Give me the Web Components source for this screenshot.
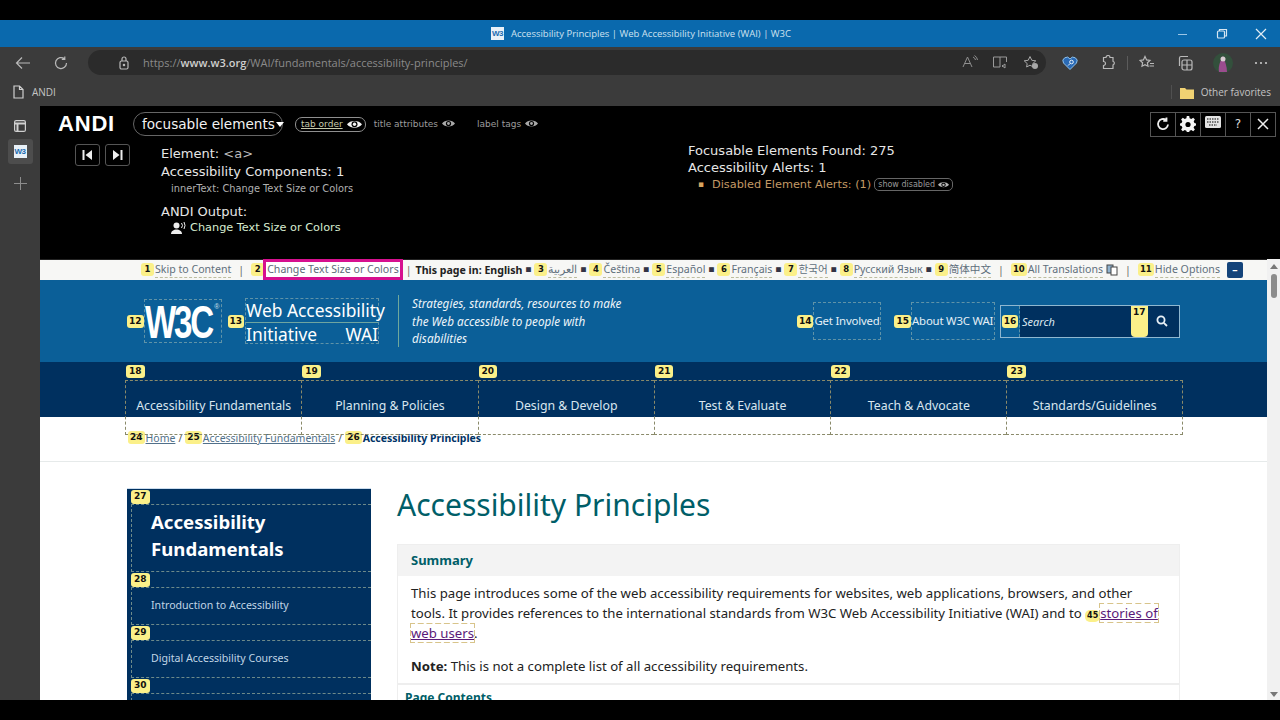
<!DOCTYPE html>
<html lang="en">
<head>
<meta charset="utf-8">
<title>Accessibility Principles</title>
<style>
    html, body { margin: 0; height: 720px; background: #000; overflow: hidden; }
    body { font-family: "Noto Sans", sans-serif; }
</style>
</head>
<body>
<app-shell></app-shell>
<script>
const eye = (c, s = 13) => `<svg width="${s}" height="${s * .7}" viewBox="0 0 20 14"><path d="M0 7C4 1 16 1 20 7C16 13 4 13 0 7Z" fill="${c}"/><circle cx="10" cy="7" r="4" fill="#000"/><circle cx="10" cy="7" r="2.2" fill="${c}"/></svg>`;
const w3Icon = `<span style="display:inline-flex;width:13px;height:13px;background:#e8f1f8;color:#1b6cb0;font:bold 8px 'Liberation Sans',sans-serif;align-items:center;justify-content:center;letter-spacing:-.5px">W3</span>`;

class NumBadge extends HTMLElement {
    constructor() {
        super();
        this.attachShadow({ mode: 'open' });
        this.shadowRoot.innerHTML = `
            <style>
                :host {
                    display: inline-block;
                    background: #fbf089;
                    color: #111;
                    font: bold 9px/13px "DejaVu Sans", sans-serif;
                    min-width: 9px;
                    padding: 0 2px;
                    border-radius: 3px;
                    text-align: center;
                    flex: none;
                    box-sizing: content-box;
                }
            </style>
            <slot></slot>
        `;
    }
}
customElements.define('num-badge', NumBadge);

class BrowserChrome extends HTMLElement {
    constructor() {
        super();
        this.attachShadow({ mode: 'open' });
        const st = 'fill="none" stroke="#b9b9b9" stroke-width="1.2"';
        this.shadowRoot.innerHTML = `
            <style>
                :host { display: block; font-family: "Open Sans", sans-serif; }
                #title {
                    height: 27px; background: #0a69ad; color: #cfe2f0; font-size: 9.5px;
                    display: grid; grid-template-columns: 1fr auto 1fr; align-items: center;
                }
                #tt { display: flex; align-items: center; gap: 7px; padding-left: 2px; }
                #win { display: flex; justify-content: flex-end; gap: 27px; padding-right: 13px; align-items: center; }
                #tools { height: 31px; background: #3b3b3b; display: flex; align-items: center; }
                .ic { display: flex; width: 38px; justify-content: center; flex: none; }
                #pill {
                    height: 25px; width: 974px; margin-left: 8px; background: #2b2b2b; border-radius: 13px;
                    display: flex; align-items: center; padding-left: 30px; box-sizing: border-box;
                    font-size: 11px; color: #8a8a8a; position: relative;
                }
                #pill b { font-weight: 600; color: #d0d0d0; }
                #lock { margin-right: 13px; display: flex; }
                #pr { margin-left: auto; display: flex; padding-right: 0; }
                #pr .ic { width: 30.5px; }
                #favs {
                    height: 28px; background: #3b3b3b; color: #c4c4c4; font-size: 10px;
                    display: flex; align-items: center; padding: 0 9px 0 13px; gap: 8px;
                }
                #oth { margin-left: auto; display: flex; align-items: center; gap: 7px; }
            </style>
            <div id="title">
                <span></span>
                <div id="tt">${w3Icon}<span>Accessibility Principles | Web Accessibility Initiative (WAI) | W3C</span></div>
                <div id="win">
                    <svg width="12" height="12"><path d="M1 6.5H10" stroke="#9cc6e6"/></svg>
                    <svg width="12" height="12" ${st.replace('#b9b9b9','#d6e6f2')}><rect x="1.5" y="3" width="7" height="7" rx="1"/><path d="M3.5 3V1.5H10.5V8H8.5"/></svg>
                    <svg width="12" height="12"><path d="M1 1L11 11M11 1L1 11" stroke="#e2edf5" stroke-width="1.2"/></svg>
                </div>
            </div>
            <div id="tools">
                <div class="ic" style="margin-left:4px"><svg width="16" height="14" ${st}><path d="M15 7H2M7 1.5L1.5 7L7 12.5"/></svg></div>
                <div class="ic"><svg width="14" height="14" ${st}><path d="M12.5 7A5.5 5.5 0 1 1 10.5 2.8M10.8 .5V3.4H7.8"/></svg></div>
                <div id="pill">
                    <span id="lock"><svg width="12" height="14" ${st}><rect x="2" y="5" width="8" height="8" rx="1.5"/><path d="M4 5V3A2 2 0 0 1 8 3V5"/><circle cx="6" cy="9" r=".7" fill="#b9b9b9"/></svg></span>
                    <span>https://<b>www.w3.org</b>/WAI/fundamentals/accessibility-principles/</span>
                    <div id="pr">
                        <div class="ic"><svg width="16" height="13" fill="none" stroke="#8f8f8f"><path d="M1 12L5.5 2L10 12M3 8.5H8M11 2A4 4 0 0 1 13.5 5M12.5 .5A6 6 0 0 1 15.5 5"/></svg></div>
                        <div class="ic"><svg width="16" height="14" fill="none" stroke="#9a9a9a"><path d="M8 2H1.5V12H8ZM8 2H14.5V7M10 10.5H11L13 9V13L11 11.5H10"/></svg></div>
                        <div class="ic"><svg width="16" height="15" fill="none" stroke="#a8a8a8"><path d="M7 1.5L8.8 5.3L12.8 5.8L9.8 8.6L10.4 12L7 10.2L3.6 12L4.2 8.6L1.2 5.8L5.2 5.3Z"/><circle cx="12" cy="11" r="3" fill="#a8a8a8" stroke="none"/></svg></div>
                    </div>
                </div>
                <div class="ic" style="margin-left:5px"><svg width="16" height="14"><path d="M8 13.5L1.5 7A3.8 3.8 0 0 1 8 3A3.8 3.8 0 0 1 14.5 7Z" fill="#2a6ab5" stroke="#8fc0ea"/><circle cx="9.5" cy="6" r="1.8" fill="none" stroke="#e6f0fa"/><path d="M8.2 7.4L6 9.6" stroke="#e6f0fa"/></svg></div>
                <div class="ic"><svg width="16" height="16" ${st}><path d="M6 2.5A2 2 0 0 1 10 2.5H13V6.2A2 2 0 0 1 13 10V13.5H3.5V10.5A2 2 0 0 0 3.5 6.5V2.5Z"/></svg></div>
                <svg width="1" height="14" style="flex:none"><path d="M.5 0V14" stroke="#5c5c5c"/></svg>
                <div class="ic" style="width:38px"><svg width="16" height="15" ${st}><path d="M6 1.5L7.6 4.9L11 5.4L8.4 7.8L9 11.2L6 9.6L3 11.2L3.6 7.8L1 5.4L4.4 4.9ZM11 8.5H15M10.5 11H15"/></svg></div>
                <div class="ic"><svg width="16" height="16" ${st}><rect x="5" y="5" width="10" height="10" rx="2"/><path d="M10 5V15M5 10H15M2.5 11V3A1.5 1.5 0 0 1 4 1.5H11"/></svg></div>
                <div class="ic"><svg width="20" height="20"><circle cx="10" cy="10" r="10" fill="#33503c"/><path d="M10 3C7 8 5 14 6 19H14C14 14 12 8 10 3Z" fill="#9a4d8e"/><circle cx="10" cy="6" r="2.5" fill="#d8cbd2"/></svg></div>
                <div class="ic"><svg width="14" height="4"><circle cx="2" cy="2" r="1.1" fill="#c9c9c9"/><circle cx="7" cy="2" r="1.1" fill="#c9c9c9"/><circle cx="12" cy="2" r="1.1" fill="#c9c9c9"/></svg></div>
            </div>
            <div id="favs">
                <svg width="11" height="14" fill="none" stroke="#d0d0d0" stroke-width="1.2"><path d="M1 1H6.5L10 4.5V13H1ZM6.5 1V4.5H10"/></svg>
                <span>ANDI</span>
                <div id="oth">
                    <svg width="1" height="14"><path d="M.5 0V14" stroke="#505050"/></svg>
                    <svg width="14" height="13" style="margin-left:1px"><path d="M0 2H5L6.5 3.5H14V13H0Z" fill="#f0d273"/></svg>
                    <span>Other favorites</span>
                </div>
            </div>
        `;
    }
}
customElements.define('browser-chrome', BrowserChrome);

class TabRail extends HTMLElement {
    constructor() {
        super();
        this.attachShadow({ mode: 'open' });
        this.shadowRoot.innerHTML = `
            <style>
                :host { display: flex; flex-direction: column; align-items: center; width: 40px; background: #3b3b3b; padding-top: 14px; box-sizing: border-box; }
                #sel { width: 25px; height: 25px; background: #4d4d4d; border-radius: 3px; display: flex; align-items: center; justify-content: center; margin: 7px 0 13px; }
            </style>
            <svg width="12" height="12" fill="none" stroke="#cfcfcf" stroke-width="1.2"><rect x=".6" y=".6" width="10.8" height="10.8" rx="1.5"/><path d="M.6 3.5H11.4" stroke-width="2"/><path d="M3.5 3.5V11.4" stroke-width="2"/></svg>
            <div id="sel">${w3Icon}</div>
            <svg width="13" height="13"><path d="M6.5 0V13M0 6.5H13" stroke="#8d8d8d"/></svg>
        `;
    }
}
customElements.define('tab-rail', TabRail);

class AndiPanel extends HTMLElement {
    constructor() {
        super();
        this.attachShadow({ mode: 'open' });
        this.shadowRoot.innerHTML = `
            <style>
                :host {
                    display: block; height: 153px; background: #000; color: #e6e6e6; box-sizing: border-box; padding: 6px 5px 0 18px;
                    font-family: "DejaVu Sans", sans-serif; font-size: 13px;
                }
                #top { display: flex; align-items: center; height: 24px; }
                #logo { font: 900 22px/24px "Liberation Sans", sans-serif; color: #fff; letter-spacing: .8px; width: 75px; }
                #mode { border: 1px solid #666; border-radius: 12px; height: 22px; line-height: 22px; padding: 0 8px; font-size: 13.6px; color: #f2f2f2; width: 132px; white-space: nowrap; }
                #mode i { display: inline-block; border: 4px solid transparent; border-top: 5px solid #fff; border-bottom: 0; vertical-align: 2px; margin-left: 1px; }
                .tg { font-size: 9px; color: #9c9c9c; display: flex; align-items: center; gap: 4px; white-space: nowrap; }
                #tab { border: 1px solid #8f8f8f; border-radius: 7px; padding: 0 3px 0 5px; height: 13px; margin-left: 12px; color: #c4c8a8; }
                #tab u { color: #c8ccae; }
                #tools { margin-left: auto; display: flex; }
                .b { width: 24px; height: 23px; border: 1px solid #555; display: flex; align-items: center; justify-content: center; margin-left: 0; color: #ddd; font-size: 12px; box-sizing: content-box; margin-right: -1px; background: #000; }
                #body { display: flex; margin-top: 6px; }
                #nav { width: 103px; padding: 2px 0 0 17px; display: flex; gap: 5px; box-sizing: border-box; align-items: flex-start; flex: none; }
                .nb { width: 25px; height: 22px; border: 1px solid #555; border-radius: 3px; display: flex; align-items: center; justify-content: center; box-sizing: border-box; flex: none; }
                #left { width: 527px; padding-top: 3px; line-height: 18px; }
                #left .l { height: 18px; }
                #inner { margin-left: 10px; font-size: 9.8px; line-height: 13px; color: #b0b0b0; height: 15px; margin-top: 1px; }
                #out { margin-top: 6px; }
                #say { margin-left: 10px; font-size: 11.3px; color: #d7ecd0; display: flex; align-items: center; gap: 4px; height: 16px; margin-top: -1px; }
                #right { line-height: 17px; font-size: 13px; }
                #alert { color: #c49a66; font-size: 11.3px; display: flex; align-items: center; padding-left: 10px; height: 17px; }
                #alert s { text-decoration: none; color: #d9a55f; width: 14px; font-size: 9px; }
                #show { border: 1px solid #666; border-radius: 5px; font-size: 8px; color: #999; height: 11px; line-height: 11px; padding: 0 3px 0 3px; margin-left: 3px; display: flex; align-items: center; gap: 3px; }
            </style>
            <div id="top">
                <div id="logo">ANDI</div>
                <div id="mode">focusable elements<i></i></div>
                <div class="tg" id="tab"><u>tab order</u>${eye('#f2f2f2', 15)}</div>
                <div class="tg" style="margin-left:8px">title attributes ${eye('#a8a8a8')}</div>
                <div class="tg" style="margin-left:22px">label tags ${eye('#a8a8a8')}</div>
                <div id="tools">
                    <div class="b"><svg width="14" height="14" fill="none" stroke="#eee" stroke-width="1.8"><path d="M12 7.5A5 5 0 1 1 10 3M10.5 .5V3.8H7.2"/></svg></div>
                    <div class="b"><svg width="16" height="16" viewBox="0 0 16 16"><path d="M6.8 0H9.2L9.6 2.2L11.3 3L13.2 1.8L14.9 3.5L13.7 5.3L14.4 7L16 7.4V9.6L14.4 10L13.6 11.7L14.9 13.5L13.2 15.2L11.3 14L9.6 14.7L9.2 16H6.8L6.4 14.7L4.7 14L2.8 15.2L1.1 13.5L2.4 11.7L1.6 10L0 9.6V7.4L1.6 7L2.3 5.3L1.1 3.5L2.8 1.8L4.7 3L6.4 2.2Z" fill="#f5f5f5"/><circle cx="8" cy="8.5" r="2.6" fill="#000"/></svg></div>
                    <div class="b"><svg width="16" height="12" style="margin-top:-5px"><rect width="16" height="12" rx="1.5" fill="#e4e4e4"/><path d="M2 3H14M2 6H14M4 9H12" stroke="#000" stroke-dasharray="1.5 1"/></svg></div>
                    <div class="b">?</div>
                    <div class="b"><svg width="12" height="12"><path d="M1 1L11 11M11 1L1 11" stroke="#eee" stroke-width="1.5"/></svg></div>
                </div>
            </div>
            <div id="body">
                <div id="nav">
                    <div class="nb"><svg width="11" height="10"><path d="M.5 0H2.5V10H.5ZM10 0V10L3.5 5Z" fill="#eee"/></svg></div>
                    <div class="nb"><svg width="11" height="10"><path d="M1 0V10L7.5 5ZM8.5 0H10.5V10H8.5Z" fill="#eee"/></svg></div>
                </div>
                <div id="left">
                    <div class="l">Element: <span style="color:#bbb">&lt;a&gt;</span></div>
                    <div class="l">Accessibility Components: 1</div>
                    <div id="inner">innerText: Change Text Size or Colors</div>
                    <div class="l" id="out">ANDI Output:</div>
                    <div id="say"><svg width="15" height="12"><circle cx="5.5" cy="3.5" r="3" fill="#eee"/><path d="M0 12C0 6 11 6 11 12Z" fill="#eee"/><path d="M10.5 1A4 4 0 0 1 10.5 6M13 0A7 7 0 0 1 13 7" fill="none" stroke="#eee"/></svg>Change Text Size or Colors</div>
                </div>
                <div id="right">
                    <div>Focusable Elements Found: 275</div>
                    <div>Accessibility Alerts: 1</div>
                    <div id="alert"><s>▪</s>Disabled Element Alerts: (1)<span id="show">show disabled ${eye('#b5b5b5', 11)}</span></div>
                </div>
            </div>
        `;
    }
}
customElements.define('andi-panel', AndiPanel);

class OptionStrip extends HTMLElement {
    constructor() {
        super();
        this.attachShadow({ mode: 'open' });
        const item = (n, t, lang) => `<num-badge>${n}</num-badge><span class="o"${lang ? ` lang="${lang}"` : ''}>${t}</span>`;
        this.shadowRoot.innerHTML = `
            <style>
                :host {
                    display: flex; height: 21px; background: #f7f7f5; align-items: center; padding-left: 101px;
                    font: 10.6px "Noto Sans", "Noto Sans CJK KR", sans-serif; color: #666; white-space: nowrap; box-shadow: inset 0 1px 0 #222;
                }
                .o { border: 1px dashed #bdbd9f; border-width: 0 0 1px 0; padding: 0 0 1px; margin-left: 1px; line-height: 14px; color: #5f6f7c; }
                .sq { color: #334; font-size: 6px; margin: 0 3px; }
                .sep { color: #666; margin: 0 7px; }
                #cur { outline: 3px solid #d6108f; outline-offset: 0; background: #fff; padding: 0 1px; margin-left: 2px; line-height: 15px; color: #5c6a78; }
                b { color: #222; font-weight: 700; }
                num-badge { font-size: 8.5px; }
                #hide { width: 16px; height: 16px; background: #13437a; border-radius: 2px; margin-left: 7px; color: #fff; text-align: center; line-height: 14px; font-weight: 700; }
            </style>
            ${item(1, 'Skip to Content')}<span class="sep">|</span>
            <num-badge>2</num-badge><span id="cur">Change Text Size or Colors</span><span class="sep" style="margin:0 4px 0 6px">|</span>
            <b>This page in: English</b><span class="sq">■</span>
            ${item(3, 'العربية', 'ar')}<span class="sq">■</span>
            ${item(4, 'Čeština', 'cs')}<span class="sq">■</span>
            ${item(5, 'Español', 'es')}<span class="sq">■</span>
            ${item(6, 'Français', 'fr')}<span class="sq">■</span>
            ${item(7, '한국어', 'ko')}<span class="sq">■</span>
            ${item(8, 'Русский Язык', 'ru')}<span class="sq">■</span>
            ${item(9, '简体中文', 'zh')}<span class="sep">|</span>
            ${item(10, 'All Translations')}<svg width="12" height="12" style="margin-left:3px" fill="none" stroke="#444"><rect x="1" y="1" width="6" height="8" fill="#8fb3d0"/><rect x="5" y="3" width="6" height="8" fill="#fff"/></svg><span class="sep">|</span>
            ${item(11, 'Hide Options')}<div id="hide">–</div>
        `;
    }
}
customElements.define('option-strip', OptionStrip);

class SiteHead extends HTMLElement {
    constructor() {
        super();
        this.attachShadow({ mode: 'open' });
        this.shadowRoot.innerHTML = `
            <style>
                :host {
                    display: flex; height: 82px; background: #0b5f98; padding-left: 87px; color: #fff; align-items: center;
                    font-family: "Noto Sans", sans-serif;
                }
                .d { border: 1px dashed #5f93a8; box-sizing: border-box; }
                #mark { display: flex; align-items: center; gap: 0; }
                #logo { width: 78px; height: 44px; margin-left: 0; position: relative; overflow: hidden; font: 700 46px/44px "Liberation Sans", sans-serif; letter-spacing: -3px; transform-origin: left; white-space: nowrap; }
                #logo span { display: inline-block; transform: scaleX(.72); transform-origin: left; }
                #logo i { position: absolute; font: 400 7px/8px "Liberation Sans", sans-serif; right: 1px; top: 3px; color: #cfe0ee; letter-spacing: 0; }
                #wai { width: 134px; height: 46px; margin-left: 1px; font-size: 17.4px; line-height: 23px; }
                #wai div { border-bottom: 1px solid #6fa5a0; height: 22.5px; white-space: nowrap; }
                #wai div + div { border: 0; display: flex; justify-content: space-between; }
                #tag { border-left: 1px solid #6fa89c; margin-left: 19px; padding-left: 13px; width: 222px; font: italic 11.7px/17.5px "Noto Sans", sans-serif; height: 52px; color: #eef5fa; }
                #links { margin-left: auto; display: flex; align-items: center; margin-right: 87px; font-size: 11.4px; white-space: nowrap; }
                .lk { height: 38px; line-height: 36px; letter-spacing: -.2px; color: #e4eff6; }
                #search { width: 180px; height: 33px; background: #00305f; border: 1px solid #8fb7d0; box-sizing: border-box; margin-left: 5px; display: flex; align-items: center; position: relative; }
                #sb { width: 18px; height: 31px; background: #0b5f98; flex: none; display: flex; align-items: center; justify-content: center; border-right: 1px dashed #5f93a8; }
                #st { font: italic 11px "Noto Sans", sans-serif; color: #dde8f0; margin-left: 2px; }
                #s17 { position: absolute; left: 130px; top: 0; height: 31px; border-radius: 0 0 4px 4px; }
                #glass { position: absolute; right: 11px; top: 9px; }
            </style>
            <div id="mark">
                <num-badge>12</num-badge>
                <div id="logo" class="d"><span>W3C</span><i>®</i></div>
                <num-badge style="margin-left:6px">13</num-badge>
                <div id="wai" class="d"><div>Web Accessibility</div><div><span>Initiative</span><span>WAI</span></div></div>
            </div>
            <div id="tag">Strategies, standards, resources to make the Web accessible to people with disabilities</div>
            <div id="links">
                <num-badge>14</num-badge><div class="lk d" style="width:68px">Get Involved</div>
                <num-badge style="margin-left:13px">15</num-badge><div class="lk d" style="width:84px">About W3C WAI</div>
                <div id="search">
                    <div id="sb"><num-badge>16</num-badge></div>
                    <span id="st">Search</span>
                    <num-badge id="s17">17</num-badge>
                    <svg id="glass" width="12" height="12" fill="none" stroke="#e8f0f6" stroke-width="1.8"><circle cx="5" cy="5" r="3.6"/><path d="M7.8 7.8L11 11"/></svg>
                </div>
            </div>
        `;
    }
}
customElements.define('site-head', SiteHead);

class SiteNav extends HTMLElement {
    constructor() {
        super();
        this.attachShadow({ mode: 'open' });
        const names = ['Accessibility Fundamentals', 'Planning &amp; Policies', 'Design &amp; Develop', 'Test &amp; Evaluate', 'Teach &amp; Advocate', 'Standards/Guidelines'];
        this.shadowRoot.innerHTML = `
            <style>
                :host { display: block; height: 55px; background: #00305f; padding: 18px 0 0 85px; box-sizing: border-box; position: relative; z-index: 1; }
                #row { display: grid; grid-template-columns: repeat(6, 176.3px); }
                .n {
                    height: 55px; border: 1px dashed #8a8a6a; border-right-width: 0; box-sizing: border-box; position: relative;
                    font: 12.3px/50px "Noto Sans", sans-serif; color: #d8e6ef; text-align: center;
                }
                .n:last-child { border-right-width: 1px; }
                num-badge { position: absolute; left: 0; top: -16px; font-size: 9px; line-height: 13px; padding: 0 3px; }
            </style>
            <div id="row">${names.map((n, i) => `<div class="n"><num-badge>${18 + i}</num-badge>${n}</div>`).join('')}</div>
        `;
    }
}
customElements.define('site-nav', SiteNav);

class CrumbRow extends HTMLElement {
    constructor() {
        super();
        this.attachShadow({ mode: 'open' });
        this.shadowRoot.innerHTML = `
            <style>
                :host {
                    display: flex; height: 45px; background: #fff; border-bottom: 1px solid #e6eaea; box-sizing: border-box; padding: 14px 0 0 88px;
                    font: 10.5px/15px "Noto Sans", sans-serif; color: #555; white-space: nowrap; align-items: flex-start;
                }
                a { color: #51708a; text-decoration: underline; margin-left: 1px; }
                b { color: #003366; margin-left: 1px; font-weight: 700; }
                span { margin: 0 3px; }
                num-badge { font-size: 9px; }
            </style>
            <num-badge>24</num-badge><a>Home</a><span>/</span><num-badge>25</num-badge><a>Accessibility Fundamentals</a><span>/</span><num-badge>26</num-badge><b>Accessibility Principles</b>
        `;
    }
}
customElements.define('crumb-row', CrumbRow);

class SideMenu extends HTMLElement {
    constructor() {
        super();
        this.attachShadow({ mode: 'open' });
        const rows = [[28, 'Introduction to Accessibility'], [29, 'Digital Accessibility Courses']];
        this.shadowRoot.innerHTML = `
            <style>
                :host { display: block; width: 244px; background: #00305f; flex: none; height: 213px; overflow: hidden; border-top: 1px solid #cde; box-sizing: border-box; padding-left: 4px; font-family: "Noto Sans", sans-serif; }
                .b { height: 15px; padding-top: 1px; box-sizing: border-box; display: flex; }
                num-badge { padding: 0 3px; font-size: 9px; }
                .d { border: 1px dashed #6d8a8a; border-right: 0; }
                #h { height: 68px; padding: 3px 0 0 19px; font: 700 18.6px/27px "Noto Sans", sans-serif; color: #fff; box-sizing: border-box; margin-left: 0; }
                .r { height: 38px; line-height: 35px; padding-left: 19px; font-size: 10.6px; color: #c0d6e6; box-sizing: border-box; }
            </style>
            <div class="b"><num-badge>27</num-badge></div>
            <div id="h" class="d">Accessibility<br>Fundamentals</div>
            ${rows.map(r => `<div class="b"><num-badge>${r[0]}</num-badge></div><div class="r d">${r[1]}</div>`).join('')}
            <div class="b"><num-badge>30</num-badge></div>
            <div class="r d"></div>
        `;
    }
}
customElements.define('side-menu', SideMenu);

class PageMain extends HTMLElement {
    constructor() {
        super();
        this.attachShadow({ mode: 'open' });
        this.shadowRoot.innerHTML = `
            <style>
                :host { display: block; flex: 1; margin-left: 26px; font-family: "Noto Sans", sans-serif; color: #222; min-width: 0; }
                h1 { margin: 0; font: 400 30px/34px "Noto Sans", sans-serif; color: #005e68; height: 56px; box-sizing: border-box; padding-top: 0; }
                #box { border: 1px solid #eeeeee; border-bottom: 0; }
                #sum { background: #f3f3f3; height: 31px; font: 700 13px/31px "Noto Sans", sans-serif; color: #005e68; padding-left: 13px; }
                #txt { padding: 7px 13px 0; font-size: 13.2px; line-height: 20px; height: 109px; box-sizing: border-box; border-bottom: 2px solid #eee; }
                p { margin: 0 0 13px; }
                a { color: #5a1a78; text-decoration: underline; }
                a.d { outline: 1px dashed #d8c48a; }
                num-badge { font-size: 8px; line-height: 12px; border-radius: 5px; vertical-align: 0; }
                #pc { font: 700 12px/16px "Noto Sans", sans-serif; color: #005e68; padding: 5px 0 0 7px; }
            </style>
            <h1>Accessibility Principles</h1>
            <div id="box">
                <div id="sum">Summary</div>
                <div id="txt">
                    <p>This page introduces some of the web accessibility requirements for websites, web applications, browsers, and other tools. It provides references to the international standards from W3C Web Accessibility Initiative (WAI) and to <num-badge>45</num-badge><a class="d">stories of web users</a>.</p>
                    <p><b>Note:</b> This is not a complete list of all accessibility requirements.</p>
                </div>
                <div id="pc">Page Contents</div>
            </div>
        `;
    }
}
customElements.define('page-main', PageMain);

class WebPage extends HTMLElement {
    constructor() {
        super();
        this.attachShadow({ mode: 'open' });
        this.shadowRoot.innerHTML = `
            <style>
                :host { display: grid; grid-template-columns: 1fr 13px; height: 100%; background: #fff; overflow: hidden; min-height: 0; }
                #page { min-width: 0; overflow: hidden; }
                #cols { display: flex; padding: 26px 87px 0; width: 1227px; box-sizing: border-box; }
                #bar { background: #f1f1f1; position: relative; display: flex; flex-direction: column; align-items: center; }
                #up { margin-top: 5px; }
                #thumb { width: 6px; height: 24px; background: #8c8c8c; border-radius: 3px; margin-top: 5px; }
                #dn { margin-top: auto; margin-bottom: 3px; }
            </style>
            <div id="page">
                <option-strip></option-strip>
                <site-head></site-head>
                <site-nav></site-nav>
                <crumb-row></crumb-row>
                <div id="cols"><side-menu></side-menu><page-main></page-main></div>
            </div>
            <div id="bar">
                <svg id="up" width="8" height="5"><path d="M4 0L8 5H0Z" fill="#777"/></svg>
                <div id="thumb"></div>
                <svg id="dn" width="8" height="5"><path d="M4 5L8 0H0Z" fill="#777"/></svg>
            </div>
        `;
    }
}
customElements.define('web-page', WebPage);

class AppShell extends HTMLElement {
    constructor() {
        super();
        this.attachShadow({ mode: 'open' });
        this.shadowRoot.innerHTML = `
            <style>
                :host { display: flex; flex-direction: column; height: 720px; padding: 20px 0; box-sizing: border-box; background: #000; }
                #work { flex: 1; min-height: 0; display: flex; }
                #right { flex: 1; min-width: 0; display: flex; flex-direction: column; }
                web-page { flex: 1; min-height: 0; }
            </style>
            <browser-chrome></browser-chrome>
            <div id="work">
                <tab-rail></tab-rail>
                <div id="right">
                    <andi-panel></andi-panel>
                    <web-page></web-page>
                </div>
            </div>
        `;
    }
}
customElements.define('app-shell', AppShell);
</script>
</body>
</html>
